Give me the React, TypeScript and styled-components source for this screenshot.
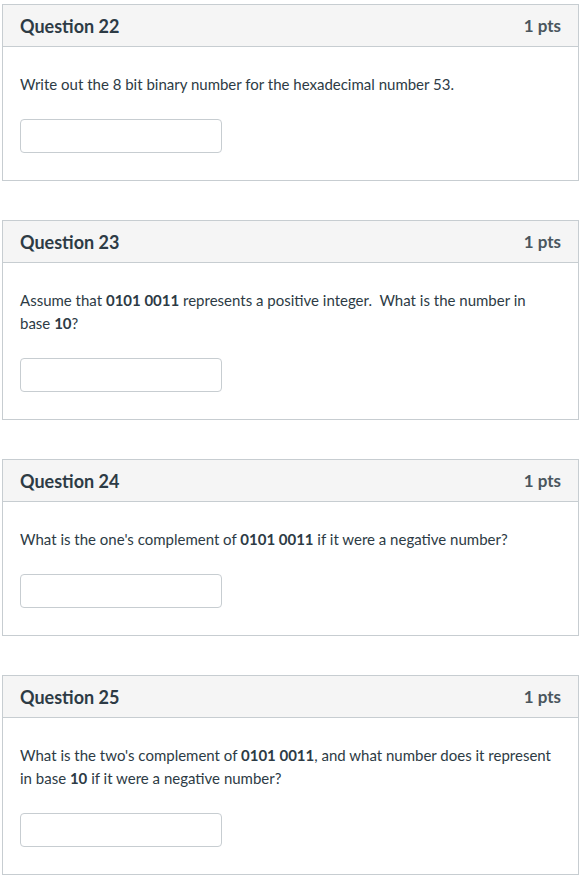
import React from "react";
import styled, { createGlobalStyle } from "styled-components";

const Global = createGlobalStyle`
  body {
    margin: 0;
    background: #ffffff;
    font-family: Lato, "Open Sans", sans-serif;
    color: #2d3b45;
  }
`;

const Page = styled.div`
  display: flex;
  flex-direction: column;
  gap: 39px;
  padding: 4px 0 0 2px;
  width: 577px;
`;

const Card = styled.section`
  border: 1px solid #c7cdd1;
  background: #fff;
`;

const Header = styled.div`
  display: flex;
  align-items: center;
  justify-content: space-between;
  height: 41px;
  padding: 0 17px;
  background: #f5f5f5;
  border-bottom: 1px solid #c7cdd1;
`;

const Title = styled.h3`
  margin: 0;
  font-size: 18px;
  font-weight: 700;
  color: #2d3b45;
`;

const Points = styled.span`
  font-size: 17px;
  font-weight: 700;
  color: #4a565e;
`;

const Body = styled.div`
  padding: 26px 24px 27px 17px;
`;

const Text = styled.p`
  margin: 0 0 23px;
  font-size: 15px;
  line-height: 23px;
  color: #2d3b45;
`;

const Answer = styled.input`
  display: block;
  box-sizing: border-box;
  width: 202px;
  height: 34px;
  border: 1px solid #c7cdd1;
  border-radius: 4px;
  background: #fff;
  outline: none;
`;

type Q = { n: number; text: React.ReactNode };

const questions: Q[] = [
  { n: 22, text: <>Write out the 8 bit binary number for the hexadecimal number 53.</> },
  {
    n: 23,
    text: (
      <>
        Assume that <b>0101 0011</b> represents a positive integer.&nbsp; What is the number in base <b>10</b>?
      </>
    ),
  },
  {
    n: 24,
    text: (
      <>
        What is the one's complement of <b>0101 0011</b> if it were a negative number?
      </>
    ),
  },
  {
    n: 25,
    text: (
      <>
        What is the two's complement of <b>0101 0011</b>, and what number does it represent in base <b>10</b> if it were a negative number?
      </>
    ),
  },
];

export default function App() {
  return (
    <>
      <Global />
      <Page>
        {questions.map((q) => (
          <Card key={q.n}>
            <Header>
              <Title>Question {q.n}</Title>
              <Points>1 pts</Points>
            </Header>
            <Body>
              <Text>{q.text}</Text>
              <Answer type="text" />
            </Body>
          </Card>
        ))}
      </Page>
    </>
  );
}
